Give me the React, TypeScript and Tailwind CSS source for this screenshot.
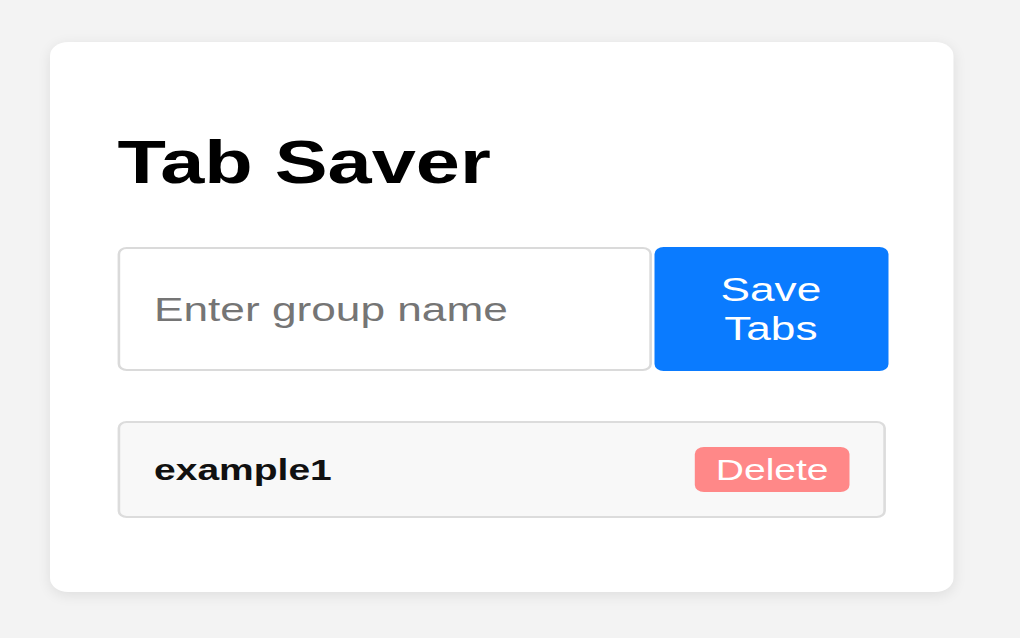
import React from "react";

export default function App() {
  return (
    <div
      className="w-[1020px] h-[638px] bg-[#f3f3f3] pt-[42px] pl-[50px] overflow-hidden"
      style={{ fontFamily: '"Liberation Sans", Arial, sans-serif' }}
    >
      <div className="w-[695px] origin-top-left scale-x-[1.3] bg-white rounded-[14px] shadow-[0_3px_12px_rgba(0,0,0,0.09)] pt-[90px] pb-[74px] pl-[52px] pr-[50px]">
        <h1 className="text-[61px] leading-none font-bold text-black">Tab Saver</h1>

        <div className="mt-[54px] flex gap-[1.5px] h-[124px]">
          <input
            type="text"
            placeholder="Enter group name"
            className="w-[411px] h-full border-2 border-[#dadada] rounded-[7px] bg-white pl-[26px] pr-3 text-[34px] text-black placeholder:text-[#757575] outline-none"
          />
          <button className="w-[180px] h-full rounded-[7px] bg-[#0a7bff] text-white text-[34px] leading-[39px] px-4 text-center">
            Save Tabs
          </button>
        </div>

        <div className="mt-[50px] mr-[2px] h-[97px] flex items-center justify-between border-2 border-[#dcdcdc] rounded-[7px] bg-[#f8f8f8] pl-[26px] pr-[26px]">
          <span className="text-[30px] font-bold text-[#111]">example1</span>
          <button className="w-[119px] h-[45px] rounded-[7px] bg-[#ff8888] text-white text-[30px] leading-none text-center">
            Delete
          </button>
        </div>
      </div>
    </div>
  );
}
